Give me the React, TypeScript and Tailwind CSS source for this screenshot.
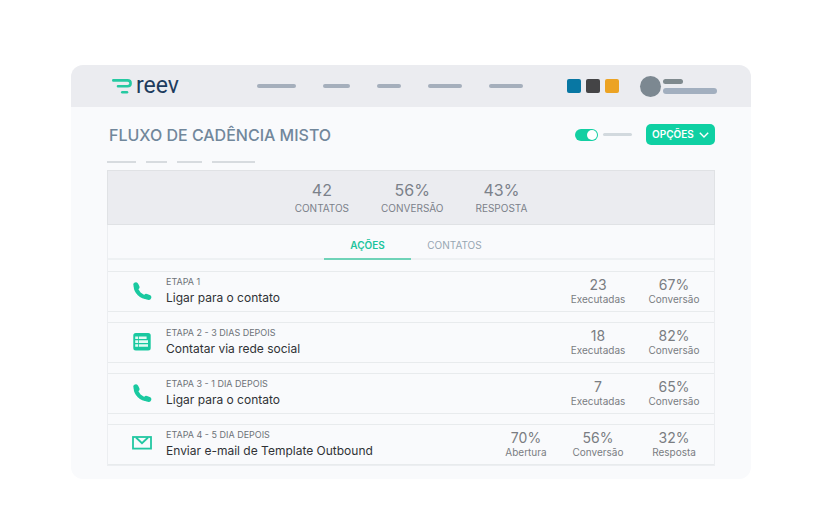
import { useState } from "react";

type Metric = {
  value: string;
  label: string;
};

type Step = {
  id: number;
  icon: "phone" | "social" | "mail";
  stage: string;
  title: string;
  metrics: Metric[];
};

const summary: Metric[] = [
  { value: "42", label: "CONTATOS" },
  { value: "56%", label: "CONVERSÃO" },
  { value: "43%", label: "RESPOSTA" },
];

const steps: Step[] = [
  {
    id: 1,
    icon: "phone",
    stage: "ETAPA 1",
    title: "Ligar para o contato",
    metrics: [
      { value: "23", label: "Executadas" },
      { value: "67%", label: "Conversão" },
    ],
  },
  {
    id: 2,
    icon: "social",
    stage: "ETAPA 2 - 3 DIAS DEPOIS",
    title: "Contatar via rede social",
    metrics: [
      { value: "18", label: "Executadas" },
      { value: "82%", label: "Conversão" },
    ],
  },
  {
    id: 3,
    icon: "phone",
    stage: "ETAPA 3 - 1 DIA DEPOIS",
    title: "Ligar para o contato",
    metrics: [
      { value: "7", label: "Executadas" },
      { value: "65%", label: "Conversão" },
    ],
  },
  {
    id: 4,
    icon: "mail",
    stage: "ETAPA 4 - 5 DIA DEPOIS",
    title: "Enviar e-mail de Template Outbound",
    metrics: [
      { value: "70%", label: "Abertura" },
      { value: "56%", label: "Conversão" },
      { value: "32%", label: "Resposta" },
    ],
  },
];

const tabs = ["AÇÕES", "CONTATOS"];

function StepIcon({ icon }: { icon: Step["icon"] }) {
  if (icon === "phone") {
    return (
      <svg className="size-5" viewBox="0 0 20 20" fill="none" aria-hidden="true">
        <path d="M3.6 5C3.8 11 9 16.2 15.6 16.4" stroke="#19c9a0" strokeWidth="4" />
        <path d="M3.9 3.8L5 6.1M14.2 15.4L16.8 16.4" stroke="#19c9a0" strokeWidth="5" strokeLinecap="round" />
      </svg>
    );
  }
  if (icon === "social") {
    return (
      <svg className="size-5" viewBox="0 0 20 20" aria-hidden="true">
        <rect x="1.3" y="1" width="17.4" height="17.4" rx="2.5" fill="#19c9a0" />
        <path
          d="M3.2 4.4h3v2.6h-3zM7 4.4h7.6v2.6H7zM3.2 8.2h3v2.8h-3zM7 8.2h9v2.8H7zM3.2 12.2h3v2.6h-3zM7 12.2h9v2.6H7z"
          fill="#e4fbf4"
        />
      </svg>
    );
  }
  return (
    <svg className="size-5" viewBox="0 0 20 20" fill="none" stroke="#22c7a2" strokeWidth="1.8" aria-hidden="true">
      <rect x="1" y="3" width="18" height="11.6" />
      <path d="M4 3.5L10 9.2L16 3.5" />
    </svg>
  );
}

function Header() {
  return (
    <header className="flex h-[42px] items-center bg-[#ebecf0] pl-10 pr-[34px]">
      <a href="#" className="flex w-[146px] items-center gap-[3px]">
        <svg className="h-[18px] w-[22px]" viewBox="0 0 22 18" fill="none" stroke="#25c9a1" strokeWidth="2.6" strokeLinecap="round" aria-hidden="true">
          <path d="M2.3 3.4H16.5C18.6 3.4 19.6 4.6 19.6 6.2C19.6 8 18.4 9.2 16.5 9.2H7" />
          <path d="M11.3 15.2H16" />
        </svg>
        <span className="font-[Roboto,sans-serif] text-[23px] leading-6 text-[#1d3c5e]">reev</span>
      </a>
      <nav className="flex items-center gap-[27px]">
        <span className="h-1 w-[39px] rounded-full bg-[#a5afbc]" />
        <span className="h-1 w-[27px] rounded-full bg-[#a5afbc]" />
        <span className="h-1 w-6 rounded-full bg-[#a5afbc]" />
        <span className="h-1 w-[34px] rounded-full bg-[#a5afbc]" />
        <span className="h-1 w-[34px] rounded-full bg-[#a5afbc]" />
      </nav>
      <div className="ml-auto flex gap-[5px]">
        <span className="size-[14px] rounded-xs bg-[#0877a3]" />
        <span className="size-[14px] rounded-xs bg-[#444446]" />
        <span className="size-[14px] rounded-xs bg-[#eca323]" />
      </div>
      <div className="ml-[21px] flex items-center gap-[2px]">
        <span className="size-[21px] rounded-full bg-[#7c8891]" />
        <div className="flex flex-col gap-1">
          <span className="h-[5px] w-5 rounded-full bg-[#7f8a8e]" />
          <span className="h-[6px] w-[54px] rounded-full bg-[#a2afbf]" />
        </div>
      </div>
    </header>
  );
}

function StepRow({ step }: { step: Step }) {
  return (
    <li className="flex h-[41px] items-center border-y border-[#e8ebed] pb-px pl-6">
      <StepIcon icon={step.icon} />
      <div className="ml-[14px] flex-1">
        <p className="text-[9px] leading-3 text-[#6d7278]">{step.stage}</p>
        <h2 className="mt-[2px] text-xs leading-4 text-[#303236]">{step.title}</h2>
      </div>
      <div className="flex text-center">
        {step.metrics.map((metric) => (
          <div key={metric.label} className="w-[72px] last:w-20">
            <p className="text-sm leading-4 text-[#7a7d82]">{metric.value}</p>
            <p className="text-[10px] leading-3 text-[#7a7d82]">{metric.label}</p>
          </div>
        ))}
      </div>
    </li>
  );
}

export default function App() {
  const [active, setActive] = useState(true);
  const [tab, setTab] = useState("AÇÕES");

  return (
    <div className="min-h-screen bg-white pb-10 pl-[71px] pr-[70px] pt-[65px] font-[Inter,sans-serif]">
      <div className="overflow-hidden rounded-xl bg-[#f9fafc]">
        <Header />
        <main className="px-9 pb-[13px]">
          <div className="flex items-center pt-[17px]">
            <h1 className="pl-[2px] text-base leading-5 font-medium text-[#71879b]">FLUXO DE CADÊNCIA MISTO</h1>
            <input
              type="checkbox"
              aria-label="Fluxo ativo"
              checked={active}
              onChange={(e) => setActive(e.target.checked)}
              className="ml-auto flex h-3 w-[23px] appearance-none items-center rounded-full bg-[#a5afbc] px-px before:size-[10px] before:rounded-full before:bg-white checked:justify-end checked:bg-[#13cfa2]"
            />
            <span className="ml-[5px] h-[3px] w-[29px] rounded-full bg-[#d2d9de]" />
            <button className="ml-[14px] flex h-[21px] w-[69px] items-center justify-between rounded-[5px] bg-[#0fd0a3] px-[6px] text-[10px] font-semibold text-white">
              OPÇÕES
              <svg className="h-[6px] w-[10px]" viewBox="0 0 10 6" fill="none" stroke="currentColor" strokeWidth="1.4" aria-hidden="true">
                <path d="M0.8 0.8L5 5L9.2 0.8" />
              </svg>
            </button>
          </div>

          <div className="mt-4 flex gap-[10px]">
            <span className="h-[2px] w-[29px] bg-[#d7dbdf]" />
            <span className="h-[2px] w-[21px] bg-[#d7dbdf]" />
            <span className="h-[2px] w-[25px] bg-[#d7dbdf]" />
            <span className="h-[2px] w-[43px] bg-[#d7dbdf]" />
          </div>

          <section className="mt-[7px] flex h-[55px] items-center justify-center gap-8 border border-[#e0e2e5] bg-[#ebecf0] text-center">
            {summary.map((metric) => (
              <div key={metric.label}>
                <p className="text-base leading-5 text-[#7b818a]">{metric.value}</p>
                <p className="text-[10px] leading-4 text-[#7b818a]">{metric.label}</p>
              </div>
            ))}
          </section>

          <section className="border-x border-b border-[#eceef1]">
            <div className="flex h-[35px] justify-center border-b-2 border-[#eef1f3]">
              {tabs.map((name) => (
                <button
                  key={name}
                  onClick={() => setTab(name)}
                  className={
                    name === tab
                      ? "-mb-[2px] w-[87px] border-b-2 border-[#6fd3b8] pt-2 text-[10px] font-semibold text-[#1cc49c]"
                      : "-mb-[2px] w-[87px] border-b-2 border-transparent pt-2 text-[10px] text-[#97a6b2]"
                  }
                >
                  {name}
                </button>
              ))}
            </div>
            <ul className="mt-[11px] flex flex-col gap-[10px]">
              {steps.map((step) => (
                <StepRow key={step.id} step={step} />
              ))}
            </ul>
          </section>
        </main>
      </div>
    </div>
  );
}
